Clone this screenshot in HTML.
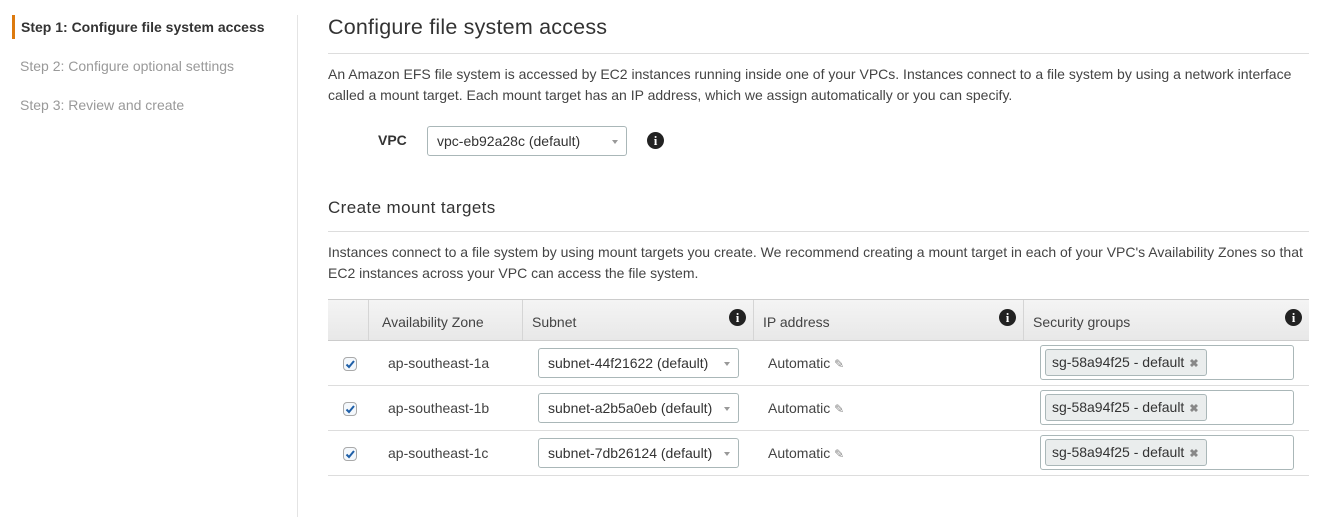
<!DOCTYPE html><html><head><style>
*{margin:0;padding:0;box-sizing:border-box}
body{width:1318px;height:517px;background:#fff;font-family:"Liberation Sans",Arial,sans-serif;font-size:14px;color:#444;position:relative;overflow:hidden}
.a{position:absolute;white-space:nowrap}
.info{position:absolute;width:17px;height:17px;border-radius:50%;background:#222;color:#fff;font:bold 13px "Liberation Serif",serif;text-align:center;line-height:17px}
.sel{position:absolute;border:1px solid #aab7b8;border-radius:3px;background:#fff;color:#333;padding-left:9px;line-height:28px;height:30px}
.sel:after{content:"";position:absolute;right:8px;top:13px;border-left:3px solid transparent;border-right:3px solid transparent;border-top:4px solid #999}
.cb{position:absolute;left:343px;width:14px;height:14px;border:1px solid #aaa;border-radius:4px;background:#f4f8fc}
.sg{position:absolute;left:1040px;width:254px;height:35px;border:1px solid #aab7b8;border-radius:3px}
.chip{position:absolute;left:4px;top:3px;width:162px;height:27px;border:1px solid #aab7b8;border-radius:3px;background:#eaeded;padding-left:6px;line-height:25px;color:#333}
.chip b{color:#888;font-size:11px;margin-left:5px}
.pen{color:#888;font-size:12px}
</style></head><body>
<div class="a" style="left:12px;top:15px;width:3px;height:24px;background:#dd7a0e"></div>
<div class="a" style="left:21px;top:19px;font-weight:bold;color:#333;font-size:14px">Step 1: Configure file system access</div>
<div class="a" style="left:20px;top:58px;color:#999">Step 2: Configure optional settings</div>
<div class="a" style="left:20px;top:97px;color:#999">Step 3: Review and create</div>
<div class="a" style="left:297px;top:15px;width:1px;height:502px;background:#e4e4e4"></div>

<div class="a" style="left:328px;top:15px;font-size:21.5px;letter-spacing:0.2px;color:#333">Configure file system access</div>
<div class="a" style="left:328px;top:53px;width:981px;height:1px;background:#ddd"></div>
<div class="a" style="left:328px;top:64px;line-height:21px;color:#444">An Amazon EFS file system is accessed by EC2 instances running inside one of your VPCs. Instances connect to a file system by using a network interface<br>called a mount target. Each mount target has an IP address, which we assign automatically or you can specify.</div>
<div class="a" style="left:378px;top:132px;font-weight:bold;color:#333">VPC</div>
<div class="sel" style="left:427px;top:126px;width:200px">vpc-eb92a28c (default)</div>
<div class="info" style="left:647px;top:132px">i</div>

<div class="a" style="left:328px;top:198px;font-size:17px;letter-spacing:0.4px;color:#333">Create mount targets</div>
<div class="a" style="left:328px;top:231px;width:981px;height:1px;background:#ddd"></div>
<div class="a" style="left:328px;top:242px;line-height:21px">Instances connect to a file system by using mount targets you create. We recommend creating a mount target in each of your VPC's Availability Zones so that<br>EC2 instances across your VPC can access the file system.</div>

<div class="a" style="left:328px;top:299px;width:981px;height:42px;background:linear-gradient(#f4f4f4,#e8e8e8);border-top:1px solid #ccc;border-bottom:1px solid #ccc"></div>
<div class="a" style="left:368px;top:300px;width:1px;height:40px;background:#d5d5d5"></div>
<div class="a" style="left:522px;top:300px;width:1px;height:40px;background:#d5d5d5"></div>
<div class="a" style="left:753px;top:300px;width:1px;height:40px;background:#d5d5d5"></div>
<div class="a" style="left:1023px;top:300px;width:1px;height:40px;background:#d5d5d5"></div>
<div class="a" style="left:382px;top:314px">Availability Zone</div>
<div class="a" style="left:532px;top:314px">Subnet</div>
<div class="a" style="left:763px;top:314px">IP address</div>
<div class="a" style="left:1033px;top:314px">Security groups</div>
<div class="info" style="left:729px;top:309px">i</div>
<div class="info" style="left:999px;top:309px">i</div>
<div class="info" style="left:1285px;top:309px">i</div>

<div class="a" style="left:328px;top:385px;width:981px;height:1px;background:#ddd"></div>
<div class="a" style="left:328px;top:430px;width:981px;height:1px;background:#ddd"></div>
<div class="a" style="left:328px;top:475px;width:981px;height:1px;background:#ddd"></div>

<div class="cb" style="top:357px"><svg width="12" height="12" style="position:absolute;left:0;top:0"><path d="M2.5 6.5 L5 9 L10 3" stroke="#1f5fa8" stroke-width="2" fill="none"/></svg></div>
<div class="a" style="left:388px;top:355px">ap-southeast-1a</div>
<div class="sel" style="left:538px;top:348px;width:201px">subnet-44f21622 (default)</div>
<div class="a" style="left:768px;top:355px">Automatic <span class="pen">✎</span></div>
<div class="sg" style="top:345px"><div class="chip">sg-58a94f25 - default<b>✖</b></div></div>

<div class="cb" style="top:402px"><svg width="12" height="12" style="position:absolute;left:0;top:0"><path d="M2.5 6.5 L5 9 L10 3" stroke="#1f5fa8" stroke-width="2" fill="none"/></svg></div>
<div class="a" style="left:388px;top:400px">ap-southeast-1b</div>
<div class="sel" style="left:538px;top:393px;width:201px">subnet-a2b5a0eb (default)</div>
<div class="a" style="left:768px;top:400px">Automatic <span class="pen">✎</span></div>
<div class="sg" style="top:390px"><div class="chip">sg-58a94f25 - default<b>✖</b></div></div>

<div class="cb" style="top:447px"><svg width="12" height="12" style="position:absolute;left:0;top:0"><path d="M2.5 6.5 L5 9 L10 3" stroke="#1f5fa8" stroke-width="2" fill="none"/></svg></div>
<div class="a" style="left:388px;top:445px">ap-southeast-1c</div>
<div class="sel" style="left:538px;top:438px;width:201px">subnet-7db26124 (default)</div>
<div class="a" style="left:768px;top:445px">Automatic <span class="pen">✎</span></div>
<div class="sg" style="top:435px"><div class="chip">sg-58a94f25 - default<b>✖</b></div></div>
</body></html>
